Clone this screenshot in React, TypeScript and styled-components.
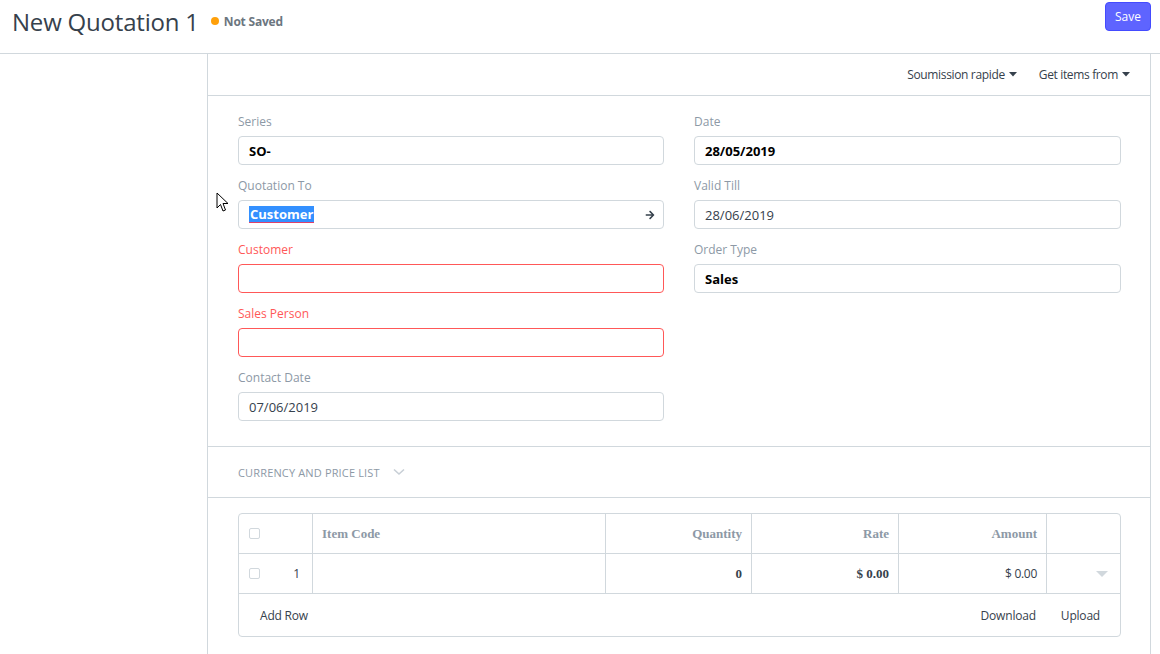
import React from "react";
import styled, { createGlobalStyle } from "styled-components";
import { FaArrowRight } from "react-icons/fa";

const GlobalStyle = createGlobalStyle`
  html, body {
    margin: 0;
    padding: 0;
    background: #fff;
    font-family: "Open Sans", "Noto Sans", sans-serif;
    color: #36414c;
  }
  * { box-sizing: border-box; }
`;

type Field = {
  label: string;
  value?: string;
  bold?: boolean;
  error?: boolean;
  selected?: boolean;
  link?: boolean;
};

const leftFields: Field[] = [
  { label: "Series", value: "SO-", bold: true },
  { label: "Quotation To", value: "Customer", selected: true, link: true },
  { label: "Customer", error: true },
  { label: "Sales Person", error: true },
  { label: "Contact Date", value: "07/06/2019" },
];

const rightFields: Field[] = [
  { label: "Date", value: "28/05/2019", bold: true },
  { label: "Valid Till", value: "28/06/2019" },
  { label: "Order Type", value: "Sales", bold: true },
];

function Caret() {
  return (
    <svg width="8" height="5" viewBox="0 0 8 5">
      <path d="M0 0 L8 0 L4 4.5 Z" fill="#36414c" />
    </svg>
  );
}

function FormField({ f }: { f: Field }) {
  return (
    <FieldWrap>
      <Label $error={f.error}>{f.label}</Label>
      <InputBox $error={f.error}>
        {f.selected ? (
          <Selected>{f.value}</Selected>
        ) : (
          <Value $bold={f.bold}>{f.value}</Value>
        )}
        {f.link && (
          <LinkIcon>
            <FaArrowRight size={10} />
          </LinkIcon>
        )}
      </InputBox>
    </FieldWrap>
  );
}

export default function App() {
  return (
    <Page>
      <GlobalStyle />
      <Header>
        <TitleGroup>
          <Title>New Quotation 1</Title>
          <Indicator>Not Saved</Indicator>
        </TitleGroup>
        <SaveButton>Save</SaveButton>
      </Header>
      <Body>
        <Sidebar />
        <Main>
          <Toolbar>
            <MenuButton>
              Soumission rapide <Caret />
            </MenuButton>
            <MenuButton>
              Get items from <Caret />
            </MenuButton>
          </Toolbar>
          <FormSection>
            <Column>
              {leftFields.map((f) => (
                <FormField key={f.label} f={f} />
              ))}
            </Column>
            <Column>
              {rightFields.map((f) => (
                <FormField key={f.label} f={f} />
              ))}
            </Column>
            <Cursor width="14" height="21" viewBox="0 0 14 21">
              <path
                d="M1 1 L1 16 L4.5 12.5 L7 19 L9.5 18 L7 11.5 L12 11.5 Z"
                fill="#fff"
                stroke="#000"
                strokeWidth="1"
                strokeLinejoin="round"
              />
            </Cursor>
          </FormSection>
          <CollapsedSection>
            CURRENCY AND PRICE LIST
            <svg width="12" height="8" viewBox="0 0 12 8">
              <path d="M1 1.5 L6 6 L11 1.5" fill="none" stroke="#c8cfd6" strokeWidth="1.6" />
            </svg>
          </CollapsedSection>
          <TableSection>
            <Grid>
              <HeadRow>
                <IdxCell>
                  <Check />
                </IdxCell>
                <HeadCell>Item Code</HeadCell>
                <HeadCell $right>Quantity</HeadCell>
                <HeadCell $right>Rate</HeadCell>
                <HeadCell $right>Amount</HeadCell>
                <HeadCell />
              </HeadRow>
              <DataRow>
                <IdxCell>
                  <Check />
                  <RowNum>1</RowNum>
                </IdxCell>
                <DataCell />
                <DataCell $right $bold>0</DataCell>
                <DataCell $right $bold>$ 0.00</DataCell>
                <DataCell $right>$ 0.00</DataCell>
                <DataCell $center>
                  <svg width="12" height="6" viewBox="0 0 12 6">
                    <path d="M0 0 L12 0 L6 6 Z" fill="#d1d8dd" />
                  </svg>
                </DataCell>
              </DataRow>
              <GridFooter>
                <FooterLink>Add Row</FooterLink>
                <FooterRight>
                  <FooterLink>Download</FooterLink>
                  <FooterLink>Upload</FooterLink>
                </FooterRight>
              </GridFooter>
            </Grid>
          </TableSection>
        </Main>
      </Body>
    </Page>
  );
}

const Page = styled.div`
  width: 1160px;
  height: 654px;
  overflow: hidden;
`;

const Header = styled.div`
  height: 54px;
  display: flex;
  justify-content: space-between;
  align-items: flex-start;
  padding: 2px 9px 0 12px;
  border-bottom: 1px solid #d1d8dd;
`;

const TitleGroup = styled.div`
  display: flex;
  align-items: center;
  gap: 12px;
  height: 38px;
`;

const Title = styled.h1`
  margin: 0;
  font-size: 24px;
  font-weight: 400;
  letter-spacing: -0.2px;
  color: #36414c;
`;

const Indicator = styled.span`
  display: flex;
  align-items: center;
  font-size: 12px;
  font-weight: 700;
  color: #6c7680;
  letter-spacing: -0.2px;
  gap: 5px;
  &::before {
    content: "";
    width: 8px;
    height: 8px;
    border-radius: 50%;
    background: #ffa00a;
  }
`;

const SaveButton = styled.button`
  width: 46px;
  height: 29px;
  background: #5e64ff;
  color: #fff;
  border: 1px solid #444bff;
  border-radius: 4px;
  font-family: "Open Sans", "Noto Sans", sans-serif;
  font-size: 12px;
  padding: 0;
`;

const Body = styled.div`
  display: flex;
`;

const Sidebar = styled.div`
  width: 208px;
  border-right: 1px solid #d1d8dd;
  height: 600px;
`;

const Main = styled.div`
  width: 943px;
  border-right: 1px solid #d1d8dd;
  height: 600px;
`;

const Toolbar = styled.div`
  height: 42px;
  display: flex;
  justify-content: flex-end;
  align-items: center;
  gap: 22px;
  padding-right: 20px;
  border-bottom: 1px solid #d1d8dd;
`;

const MenuButton = styled.span`
  display: flex;
  align-items: center;
  gap: 4px;
  font-size: 12px;
  letter-spacing: -0.35px;
  color: #36414c;
`;

const FormSection = styled.div`
  position: relative;
  display: grid;
  grid-template-columns: 426px 427px;
  column-gap: 30px;
  padding: 19px 29px 11px 30px;
  border-bottom: 1px solid #d1d8dd;
`;

const Column = styled.div`
  display: flex;
  flex-direction: column;
`;

const FieldWrap = styled.div`
  margin-bottom: 14px;
`;

const Label = styled.div<{ $error?: boolean }>`
  font-size: 12px;
  line-height: 14px;
  margin-bottom: 7px;
  color: ${(p) => (p.$error ? "#ff5858" : "#8d99a6")};
`;

const InputBox = styled.div<{ $error?: boolean }>`
  height: 29px;
  display: flex;
  align-items: center;
  justify-content: space-between;
  padding: 0 10px;
  border: 1px solid ${(p) => (p.$error ? "#ff5858" : "#d1d8dd")};
  border-radius: 4px;
  background: #fff;
`;

const Value = styled.span<{ $bold?: boolean }>`
  font-size: 13px;
  font-weight: ${(p) => (p.$bold ? 700 : 400)};
  color: ${(p) => (p.$bold ? "#000" : "#36414c")};
`;

const Selected = styled.span`
  font-size: 13px;
  font-weight: 700;
  color: #fff;
  background: #3390ff;
  line-height: 17px;
  padding: 0 1px;
  box-shadow: inset 0 -1px 0 #e0406a;
`;

const LinkIcon = styled.span`
  display: flex;
  color: #36414c;
  margin-right: -2px;
`;

const Cursor = styled.svg`
  position: absolute;
  left: 8px;
  top: 96px;
`;

const CollapsedSection = styled.div`
  height: 51px;
  display: flex;
  align-items: center;
  gap: 13px;
  padding: 0 30px;
  font-size: 11px;
  letter-spacing: 0.15px;
  color: #8d99a6;
  border-bottom: 1px solid #d1d8dd;
`;

const TableSection = styled.div`
  padding: 15px 29px 0 30px;
`;

const Grid = styled.div`
  border: 1px solid #d1d8dd;
  border-radius: 4px;
`;

const cols = "74px 293px 146px 147px 148px 1fr";

const HeadRow = styled.div`
  display: grid;
  grid-template-columns: ${cols};
  height: 40px;
  border-bottom: 1px solid #d1d8dd;
`;

const DataRow = styled(HeadRow)``;

const IdxCell = styled.div`
  display: flex;
  align-items: center;
  justify-content: space-between;
  padding: 0 12px 0 10px;
  border-right: 1px solid #d1d8dd;
`;

const Check = styled.span`
  width: 11px;
  height: 11px;
  border: 1px solid #d1d8dd;
  border-radius: 2px;
  background: #fff;
`;

const RowNum = styled.span`
  font-size: 12px;
  color: #36414c;
`;

const HeadCell = styled.div<{ $right?: boolean }>`
  display: flex;
  align-items: center;
  justify-content: ${(p) => (p.$right ? "flex-end" : "flex-start")};
  padding: 0 9px;
  font-family: "Liberation Serif", "DejaVu Serif", serif;
  font-size: 13px;
  font-weight: 700;
  color: #8d99a6;
  border-right: 1px solid #d1d8dd;
  &:last-child {
    border-right: none;
  }
`;

const DataCell = styled.div<{ $right?: boolean; $bold?: boolean; $center?: boolean }>`
  display: flex;
  align-items: center;
  justify-content: flex-end;
  padding: 0 ${(p) => (p.$center ? "12px" : "9px")};
  font-family: ${(p) =>
    p.$bold ? `"Liberation Serif", "DejaVu Serif", serif` : `"Open Sans", "Noto Sans", sans-serif`};
  font-size: ${(p) => (p.$bold ? "13px" : "12px")};
  font-weight: ${(p) => (p.$bold ? 700 : 400)};
  letter-spacing: ${(p) => (p.$bold ? "0" : "-0.3px")};
  color: #36414c;
  border-right: 1px solid #d1d8dd;
  &:last-child {
    border-right: none;
  }
`;

const GridFooter = styled.div`
  height: 42px;
  display: flex;
  align-items: center;
  justify-content: space-between;
  padding: 0 20px 0 21px;
`;

const FooterRight = styled.div`
  display: flex;
  gap: 25px;
`;

const FooterLink = styled.span`
  font-size: 12px;
  letter-spacing: -0.2px;
  color: #36414c;
`;
